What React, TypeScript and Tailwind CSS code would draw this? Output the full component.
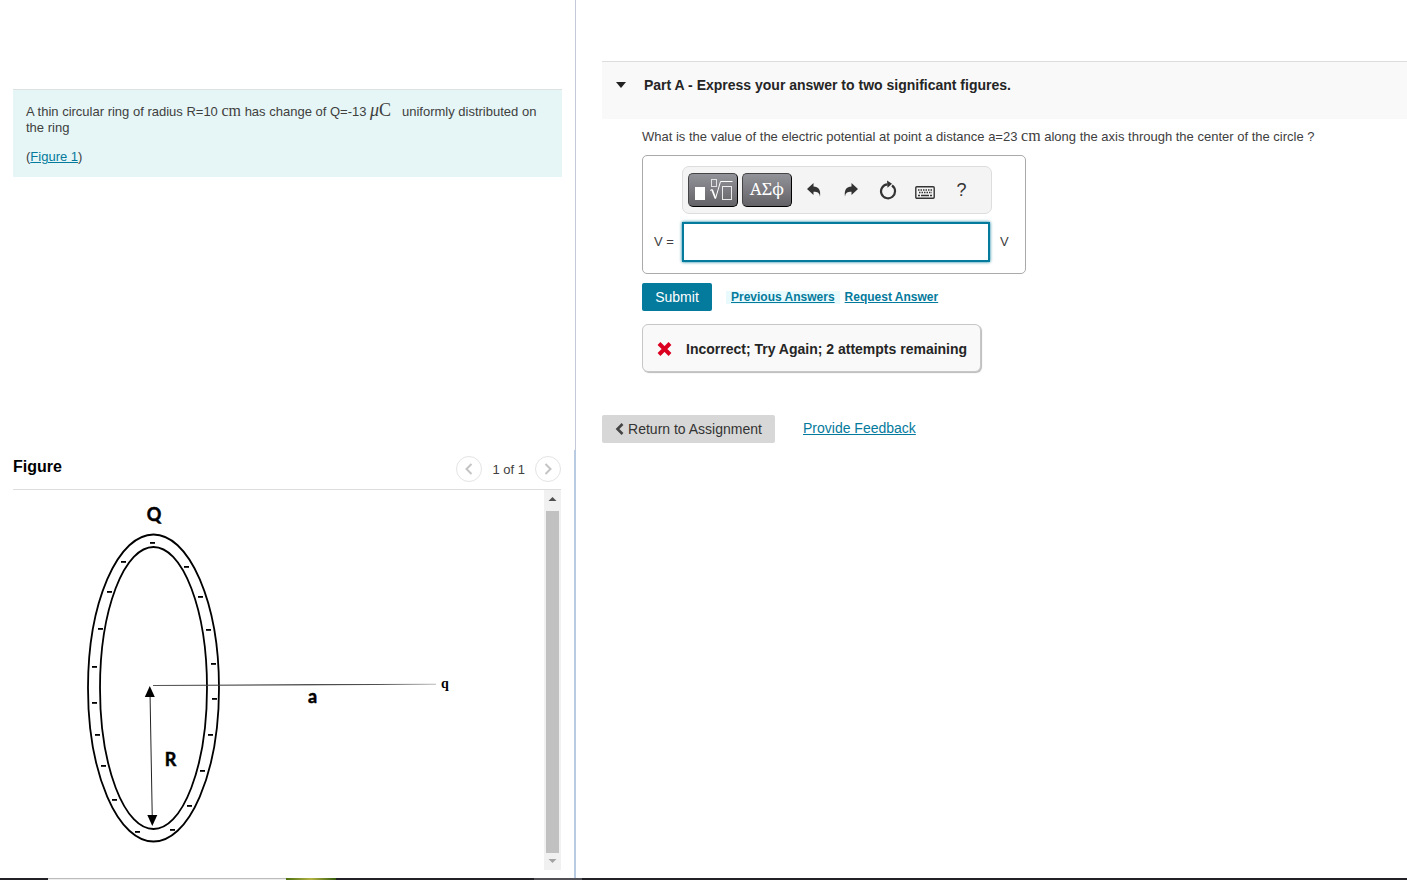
import { useState } from 'react';

interface Mark {
  x: number;
  y: number;
}

// minus signs spread around the charged ring
const charges: Mark[] = [
  { x: 152, y: 543 },
  { x: 123, y: 562 },
  { x: 109, y: 592 },
  { x: 100, y: 629 },
  { x: 94, y: 667 },
  { x: 94, y: 703 },
  { x: 97, y: 735 },
  { x: 103, y: 766 },
  { x: 114, y: 800 },
  { x: 137, y: 832 },
  { x: 172, y: 830 },
  { x: 189, y: 806 },
  { x: 202, y: 771 },
  { x: 210, y: 735 },
  { x: 214, y: 699 },
  { x: 213, y: 664 },
  { x: 208, y: 630 },
  { x: 200, y: 597 },
  { x: 186, y: 567 },
];

const linkClass = 'text-[#047a9c] underline';

function RingFigure() {
  return (
    <svg
      width="531"
      height="380"
      viewBox="13 490 531 380"
      className="block shrink-0"
      role="img"
      aria-label="Charged ring of radius R with a point q on its axis"
    >
      <defs>
        <linearGradient id="axis" gradientUnits="userSpaceOnUse" x1="153" y1="0" x2="436" y2="0">
          <stop offset="0" stopColor="#555" />
          <stop offset="0.55" stopColor="#111" />
          <stop offset="0.8" stopColor="#555" />
          <stop offset="1" stopColor="#bbb" />
        </linearGradient>
      </defs>
      <ellipse cx="153.5" cy="688" rx="65.5" ry="153.5" fill="none" stroke="#000" strokeWidth="1.8" />
      <ellipse cx="153.5" cy="688" rx="53.5" ry="141" fill="none" stroke="#000" strokeWidth="1.8" />
      {charges.map((c, i) => (
        <rect key={i} x={c.x - 2} y={c.y - 1} width="5" height="1.8" fill="#000" />
      ))}
      <path d="M153 685.5L436 684.2" stroke="url(#axis)" strokeWidth="1.1" />
      <path d="M150 692L152.300 820" stroke="#222" strokeWidth="1" />
      <path d="M149.800 686l5 11h-10z" fill="#000" />
      <path d="M152.300 826l5-11h-10z" fill="#000" />
      <g
        className="font-['Lato','Open_Sans',sans-serif] font-bold"
        fill="#000"
        stroke="#000"
        strokeWidth="0.5"
        textAnchor="middle"
      >
        <text x="154" y="521" fontSize="18">Q</text>
        <text x="170.500" y="766" fontSize="18">R</text>
        <text x="312.500" y="703" fontSize="18">a</text>
      </g>
      <text x="445" y="688" fontSize="14" textAnchor="middle" className="font-['Liberation_Serif',serif] font-bold">q</text>
    </svg>
  );
}

function Problem() {
  return (
    <section className="mx-[13px] mt-[89px] h-[88px] border-t border-[#dde1df] bg-[#e6f6f6] px-[13px] pt-3 text-[13px] leading-4">
      <p>
        A thin circular ring of radius R=10{' '}
        <span className="font-['Liberation_Serif',serif] text-base leading-4">cm</span> has change of Q=-13{' '}
        <span className="font-['Liberation_Serif',serif] text-lg leading-4">
          <i>μ</i>C
        </span>
        &nbsp;&nbsp; uniformly distributed on
        <br />
        the ring
      </p>
      <p className="mt-[13px]">
        (<a href="#figure" className={linkClass}>Figure 1</a>)
      </p>
    </section>
  );
}

function FigurePanel() {
  return (
    <section id="figure" className="border-r-2 border-[#b9cbe0] pr-[13px] pl-[13px]">
      <header className="flex h-10 items-center justify-between border-b border-[#ddd]">
        <h2 className="mb-[6px] text-base font-bold text-black">Figure</h2>
        <div className="mb-px flex items-center gap-[10px] text-[13px]">
          <button type="button" aria-label="Previous figure" className="grid size-[26px] place-items-center rounded-full border border-[#e4e4e4]">
            <svg width="10" height="12" viewBox="0 0 10 12" fill="none" stroke="#c4c4c4" strokeWidth="2"><path d="M7.500 1L2.500 6l5 5" /></svg>
          </button>
          <span className="pt-[2px]">1 of 1</span>
          <button type="button" aria-label="Next figure" className="grid size-[26px] place-items-center rounded-full border border-[#e4e4e4]">
            <svg width="10" height="12" viewBox="0 0 10 12" fill="none" stroke="#c4c4c4" strokeWidth="2"><path d="M2.500 1l5 5-5 5" /></svg>
          </button>
        </div>
      </header>
      <div className="mb-2 flex h-[380px] justify-between">
        <RingFigure />
        <div className="flex w-[17px] flex-col items-center justify-between bg-[#f1f1f1]">
          <svg width="17" height="17" viewBox="0 0 17 17"><path d="M4.500 11h8l-4-4z" fill="#505050" /></svg>
          <div className="my-1 w-[13px] flex-1 bg-[#c1c1c1]" />
          <svg width="17" height="13" viewBox="0 0 17 13"><path d="M4.500 2h8l-4 4z" fill="#a3a3a3" /></svg>
        </div>
      </div>
    </section>
  );
}

function Toolbar() {
  const dark =
    'grid h-[34px] w-[50px] place-items-center rounded-[5px] border border-t-[#444] border-l-[#444] border-r-black border-b-black bg-linear-to-b from-[#92929a] to-[#636367] text-white';
  const plain = 'grid h-[34px] w-[37px] place-items-center text-[#333]';
  return (
    <div className="flex h-12 w-[310px] items-center rounded-[7px] border border-[#ddd] bg-[#f4f4f4] pl-[5px]">
      <button type="button" aria-label="Templates" className={dark}>
        <svg width="40" height="24" viewBox="0 0 40 24" fill="none" stroke="#fff">
          <rect x="2" y="9" width="10" height="13" fill="#fff" stroke="none" />
          <rect x="18.500" y="1.500" width="5" height="7" strokeOpacity=".75" />
          <path d="M17 12.500l2-1" strokeOpacity=".9" />
          <path d="M19 11.500l3.500 9" strokeWidth="1.8" />
          <path d="M22.500 20.500l5-17H39.500" />
          <rect x="29.500" y="8.500" width="9" height="13" strokeOpacity=".85" />
        </svg>
      </button>
      <button type="button" aria-label="Greek symbols" className={`${dark} ml-1 pb-[2px] font-['Noto_Serif','Liberation_Serif',serif] text-[17px]`}>
        ΑΣϕ
      </button>
      <button type="button" aria-label="Undo" className={`${plain} ml-[3px]`}>
        <svg width="14" height="14" viewBox="0 0 14 14" fill="currentColor">
          <path d="M6.500 0v3.400C11.500 3.600 14 6.500 13 13.800c-.4-3.900-2.300-5-6.500-5V12L0 6z" />
        </svg>
      </button>
      <button type="button" aria-label="Redo" className={plain}>
        <svg width="14" height="14" viewBox="0 0 14 14" fill="currentColor">
          <path d="M7.500 0v3.400C2.500 3.600 0 6.500 1 13.800c.4-3.900 2.300-5 6.500-5V12L14 6z" />
        </svg>
      </button>
      <button type="button" aria-label="Reset" className={plain}>
        <svg width="18" height="20" viewBox="0 0 18 20" fill="none" stroke="currentColor" strokeWidth="2.200">
          <path d="M13 5.500A7 7 0 1 1 8.500 4.300" />
          <path d="M8 .5l5 3.300-4.500 4z" fill="currentColor" stroke="none" />
        </svg>
      </button>
      <button type="button" aria-label="Keyboard" className={plain}>
        <svg width="20" height="13" viewBox="0 0 20 13" fill="none" stroke="currentColor" className="mt-1">
          <rect x=".8" y=".8" width="18.400" height="11.400" rx="1" strokeWidth="1.400" />
          <path d="M3 4h14M4 6.500h13" strokeWidth="1.500" strokeDasharray="1.500 1" />
          <path d="M3 9.500h2M6 9.500h8M15 9.500h2" strokeWidth="1.500" />
        </svg>
      </button>
      <button type="button" aria-label="Help" className={`${plain} text-lg`}>
        ?
      </button>
    </div>
  );
}

function PartA() {
  const [answer, setAnswer] = useState('');

  return (
    <section className="pl-[26px]">
      <header className="mt-[61px] flex h-[58px] items-start border-t border-[#ddd] bg-[#f9f9f9] pt-[15px] pl-[14px]">
        <svg width="10" height="6" viewBox="0 0 10 6" className="mt-[5px]"><path d="M0 0h10L5 6z" fill="#222" /></svg>
        <h1 className="ml-[18px] text-sm leading-4 font-bold text-[#252525]">Part A - Express your answer to two significant figures.</h1>
      </header>

      <div className="pl-10">
        <p className="mt-[9px] text-[13px] leading-4">
          What is the value of the electric potential at point a distance a=23{' '}
          <span className="font-['Liberation_Serif',serif] text-base leading-4">cm</span> along the axis through the center of the circle ?
        </p>

        <form onSubmit={e => e.preventDefault()}>
          <div className="mt-[10px] h-[119px] w-[384px] rounded-[5px] border border-[#aaa] pt-[10px]">
            <div className="ml-[39px]">
              <Toolbar />
            </div>
            <div className="mt-2 flex items-center text-[13px]">
              <label htmlFor="answer" className="w-[39px] pl-[11px] whitespace-nowrap">V =</label>
              <input
                id="answer"
                value={answer}
                onChange={e => setAnswer(e.target.value)}
                className="h-10 w-[308px] border-2 border-[#047a9c] bg-white px-2 text-base shadow-[0_0_3px_#047a9c] outline-none"
              />
              <span className="ml-[10px]">V</span>
            </div>
          </div>

          <div className="mt-[9px] flex items-center text-xs font-bold">
            <button type="submit" className="h-7 w-[70px] rounded-[2px] bg-[#047a9c] text-sm font-normal text-white">Submit</button>
            <a href="#previous" className={`${linkClass} ml-[14px] bg-[#e8fafe] px-[5px] leading-[13px]`}>Previous Answers</a>
            <a href="#request" className={`${linkClass} ml-[5px] leading-[13px]`}>Request Answer</a>
          </div>
        </form>

        <div role="status" className="mt-[13px] flex h-12 w-[339px] items-center rounded-[6px] border border-[#c7c7c7] bg-[#f9f9f9] pt-[2px] pl-[14px] text-sm font-bold whitespace-nowrap text-[#252525] shadow-[1px_1px_1px_#bbb]">
          <svg width="15" height="14" viewBox="0 0 15 14" stroke="#db0020" strokeWidth="4"><path d="M2 1.500l11 11M13 1.500l-11 11" /></svg>
          <span className="ml-[14px]">Incorrect; Try Again; 2 attempts remaining</span>
        </div>
      </div>

      <nav className="mt-[43px] flex items-center text-sm">
        <button type="button" className="flex h-7 w-[173px] items-center justify-center gap-1 rounded-[2px] bg-[#d7d7d7] whitespace-nowrap text-[#333]">
          <svg width="9" height="12" viewBox="0 0 9 12" fill="none" stroke="#444" strokeWidth="2.600"><path d="M7.500 1L2.500 6l5 5" /></svg>
          Return to Assignment
        </button>
        <a href="#feedback" className={`${linkClass} mb-[2px] ml-7`}>Provide Feedback</a>
      </nav>
    </section>
  );
}

export default function App() {
  return (
    <div className="flex min-h-screen flex-col bg-white font-['Liberation_Sans',Arial,sans-serif] text-[#404040]">
      <main className="grid flex-1 grid-cols-[576fr_831fr]">
        <div className="flex flex-col justify-between">
          <div className="flex-1 border-r border-[#c3c9d6]">
            <Problem />
          </div>
          <FigurePanel />
        </div>
        <PartA />
      </main>
      <footer className="flex h-[2px] bg-[#222226]">
        <div className="ml-12 h-full w-[238px] border-t border-[#bbb] bg-[#eee]" />
        <div className="h-full w-[50px] bg-linear-to-r from-[#4c7010] via-[#b5b545] to-[#345c0c]" />
        <div className="ml-[198px] h-full w-12 bg-[#505056]" />
      </footer>
    </div>
  );
}
